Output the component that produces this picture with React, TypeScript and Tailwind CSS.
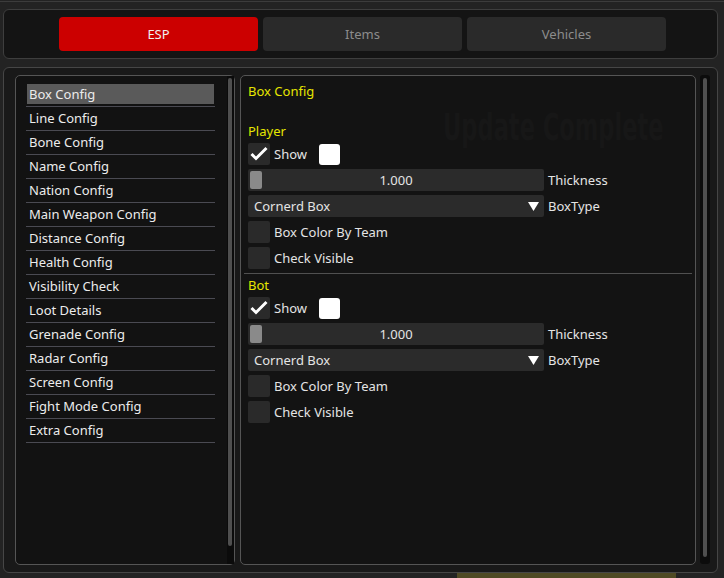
import React from "react";

const listItems = [
  "Box Config",
  "Line Config",
  "Bone Config",
  "Name Config",
  "Nation Config",
  "Main Weapon Config",
  "Distance Config",
  "Health Config",
  "Visibility Check",
  "Loot Details",
  "Grenade Config",
  "Radar Config",
  "Screen Config",
  "Fight Mode Config",
  "Extra Config",
];

function Check({ checked }: { checked?: boolean }) {
  return (
    <div className="w-[22px] h-[22px] shrink-0 rounded-[2px] bg-[#2a2a2a] flex items-center justify-center">
      {checked && (
        <svg width="22" height="22" viewBox="0 0 22 22">
          <polyline points="3.5,11 8,15.5 18.5,5" fill="none" stroke="#ffffff" strokeWidth="3" strokeLinecap="butt" strokeLinejoin="miter" />
        </svg>
      )}
    </div>
  );
}

function Section({ title }: { title: string }) {
  return (
    <>
      <div className="h-[18px] leading-[18px] text-[#e6e600]">{title}</div>
      <div className="mt-[3px] flex flex-col gap-[4px]">
        <div className="h-[22px] flex items-center">
          <Check checked />
          <span className="ml-[4px] w-[45px] text-[#e4e4e4]">Show</span>
          <div className="w-[21px] h-[21px] rounded-[3px] bg-white" />
        </div>
        <div className="h-[22px] flex items-center">
          <div className="relative w-[296px] h-[22px] rounded-[2px] bg-[#2b2b2b] flex items-center justify-center">
            <div className="absolute left-[2px] top-[2px] w-[12px] h-[18px] rounded-[2px] bg-[#8a8a8a]" />
            <span className="text-[#e4e4e4]">1.000</span>
          </div>
          <span className="ml-[4px] text-[#e4e4e4]">Thickness</span>
        </div>
        <div className="h-[22px] flex items-center">
          <div className="w-[296px] h-[22px] rounded-[2px] bg-[#2b2b2b] flex items-center justify-between pl-[6px] pr-[5px]">
            <span className="text-[#e4e4e4]">Cornerd Box</span>
            <svg width="11" height="9" viewBox="0 0 11 9">
              <polygon points="0,0 11,0 5.5,9" fill="#ffffff" />
            </svg>
          </div>
          <span className="ml-[4px] text-[#e4e4e4]">BoxType</span>
        </div>
        <div className="h-[22px] flex items-center">
          <Check />
          <span className="ml-[4px] text-[#e4e4e4]">Box Color By Team</span>
        </div>
        <div className="h-[22px] flex items-center">
          <Check />
          <span className="ml-[4px] text-[#e4e4e4]">Check Visible</span>
        </div>
      </div>
    </>
  );
}

export default function App() {
  return (
    <div
      className="relative w-[724px] h-[578px] overflow-hidden bg-[#232323] pt-[1px] text-[13px] leading-[18px]"
      style={{ fontFamily: '"Noto Sans", "Open Sans", sans-serif' }}
    >
      <div className="h-px bg-[#3c3c3c]" />
      {/* Tabs */}
      <div className="mt-[7px] ml-[3px] w-[715px] h-[50px] rounded-[6px] border border-[#3e3e3e] bg-[#141414] flex items-center pl-[55px] gap-[5px]">
        <div className="w-[199px] h-[34px] rounded-[4px] bg-[#cc0000] flex items-center justify-center text-[#f0f0f0]">ESP</div>
        <div className="w-[199px] h-[34px] rounded-[4px] bg-[#2a2a2a] flex items-center justify-center text-[#8c8c8c]">Items</div>
        <div className="w-[199px] h-[34px] rounded-[4px] bg-[#2a2a2a] flex items-center justify-center text-[#8c8c8c]">Vehicles</div>
      </div>

      {/* Main */}
      <div className="mt-[8px] ml-[3px] w-[715px] h-[506px] rounded-[6px] border border-[#464646] bg-[#191919] flex pl-[11px] pt-[7px] pb-[7px]">
        {/* List panel */}
        <div className="w-[220px] h-[490px] rounded-[5px] border border-[#555555] bg-[#121212] flex">
          <div className="flex-1 pl-[10px] pr-[12px] pt-[8px]">
            {listItems.map((item, i) => (
              <div key={item}>
                <div
                  className={
                    i === 0
                      ? "mx-[1px] h-[20px] pl-[2px] leading-[20px] bg-[#5a5a5a] text-[#ececec]"
                      : "mx-[1px] h-[20px] pl-[2px] leading-[20px] text-[#ececec]"
                  }
                >
                  {item}
                </div>
                <div className="mt-[2px] mb-[1px] h-px bg-[#4a4a52]" />
              </div>
            ))}
          </div>
          <div className="w-[7px] h-full bg-[#0b0b0b] pt-[2px]">
            <div className="ml-[1px] w-[4px] h-[468px] rounded-full bg-[#4f4f4f]" />
          </div>
        </div>

        {/* Right panel */}
        <div className="ml-[5px] relative w-[456px] h-[490px] rounded-[5px] border border-[#555555] bg-[#131313] pl-[7px] pt-[6px]">
          <div
            className="absolute left-[202px] top-[31px] whitespace-nowrap text-[38px] leading-[40px] font-bold text-[#171717]"
            style={{ fontFamily: '"DejaVu Sans Condensed", "Liberation Sans", sans-serif', transform: "scaleX(0.66)", transformOrigin: "left" }}
          >
            Update Complete
          </div>
          <div className="relative">
            <div className="h-[18px] leading-[18px] text-[#e6e600]">Box Config</div>
            <div className="mt-[22px]">
              <Section title="Player" />
            </div>
            <div className="mt-[4px] ml-[-4px] w-[448px] h-px bg-[#505050]" />
            <div className="mt-[2px]">
              <Section title="Bot" />
            </div>
          </div>
        </div>

        {/* Outer scrollbar */}
        <div className="ml-[4px] w-[10px] h-[489px] rounded-[3px] bg-[#0c0c0c] pt-[3px]">
          <div className="ml-[3px] w-[4px] h-[479px] rounded-full bg-[#4f4f4f]" />
        </div>
      </div>

      <div className="absolute left-[457px] top-[573px] w-[219px] h-[5px] bg-[#4f4a24]" />
    </div>
  );
}
